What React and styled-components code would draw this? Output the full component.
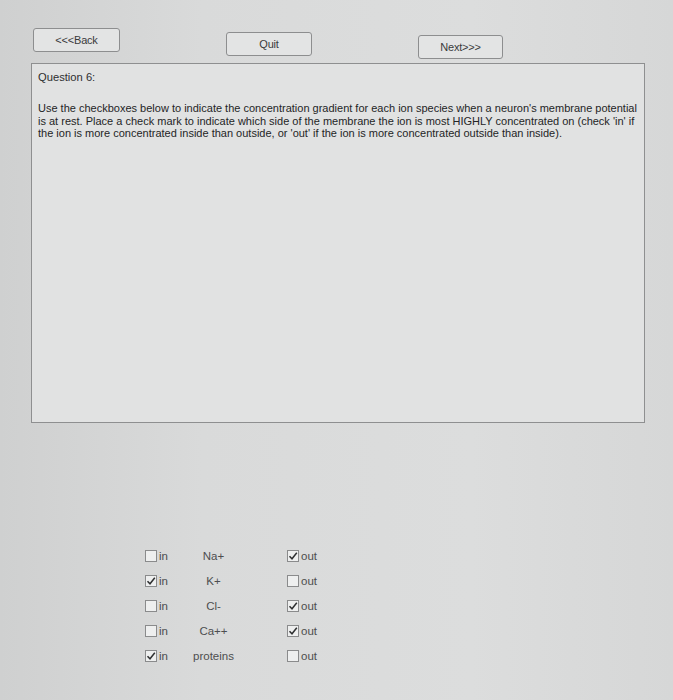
import React from "react";
import styled, { createGlobalStyle } from "styled-components";

const Global = createGlobalStyle`
  html, body { margin: 0; padding: 0; }
  body {
    background: #d6d7d7;
    font-family: "Liberation Sans", Arial, sans-serif;
    color: #2b2c2d;
  }
`;

const Page = styled.div`
  width: 673px;
  height: 700px;
  box-sizing: border-box;
  padding-top: 28px;
  background: linear-gradient(90deg, #cfd0d0 0%, #d9dada 30%, #dcdddd 70%, #d6d7d7 100%);
  overflow: hidden;
`;

const NavRow = styled.div`
  display: flex;
  align-items: flex-start;
  padding-left: 33px;
  gap: 106px;
  height: 35px;
`;

const NavButton = styled.button`
  width: ${(p) => p.$w}px;
  height: 24px;
  margin-top: ${(p) => p.$shift}px;
  box-sizing: border-box;
  border: 1px solid #8d8e8f;
  border-radius: 3px;
  background: #e3e4e4;
  font-family: "Liberation Sans", Arial, sans-serif;
  font-size: 11px;
  color: #3a3b3c;
  padding: 0;
  letter-spacing: -0.2px;
`;

const Panel = styled.div`
  margin-left: 31px;
  width: 614px;
  height: 360px;
  box-sizing: border-box;
  border: 1px solid #8e8f90;
  background: #e1e2e2;
  padding: 7px 6px;
`;

const Title = styled.div`
  font-size: 11.2px;
  line-height: 13px;
  color: #2e2f30;
`;

const Body = styled.p`
  margin: 18px 0 0;
  font-size: 11px;
  line-height: 12.5px;
  color: #242526;
  white-space: nowrap;
`;

const Grid = styled.div`
  display: grid;
  grid-template-columns: 40px 57px 45px auto;
  grid-auto-rows: 25px;
  margin: 120px 0 0 145px;
  align-items: center;
`;

const Choice = styled.label`
  display: flex;
  align-items: center;
  gap: 2px;
  font-size: 11.5px;
  color: #4d4e4f;
  grid-column: ${(p) => p.$col};
`;

const Box = styled.span`
  width: 12px;
  height: 12px;
  box-sizing: border-box;
  border: 1px solid #8a8b8c;
  background: #eeefef;
  display: flex;
  align-items: center;
  justify-content: center;
`;

const Ion = styled.span`
  grid-column: 2;
  text-align: center;
  font-size: 11.5px;
  color: #4d4e4f;
`;

const Check = () => (
  <svg width="10" height="10" viewBox="0 0 10 10">
    <path d="M1.5 5.2 L4 7.8 L8.8 1.8" fill="none" stroke="#2f3031" strokeWidth="1.5" />
  </svg>
);

const rows = [
  { ion: "Na+", inside: false },
  { ion: "K+", inside: true },
  { ion: "Cl-", inside: false },
  { ion: "Ca++", inside: false },
  { ion: "proteins", inside: true },
];

export default function App() {
  return (
    <>
      <Global />
      <Page>
        <NavRow>
          <NavButton $w={87} $shift={0}>&lt;&lt;&lt;Back</NavButton>
          <NavButton $w={86} $shift={4}>Quit</NavButton>
          <NavButton $w={85} $shift={7}>Next&gt;&gt;&gt;</NavButton>
        </NavRow>
        <Panel>
          <Title>Question 6:</Title>
          <Body>
            Use the checkboxes below to indicate the concentration gradient for each ion species when a neuron's membrane potential
            <br />
            is at rest. Place a check mark to indicate which side of the membrane the ion is most HIGHLY concentrated on (check 'in' if
            <br />
            the ion is more concentrated inside than outside, or 'out' if the ion is more concentrated outside than inside).
          </Body>
        </Panel>
        <Grid>
          {rows.map((r) => (
            <React.Fragment key={r.ion}>
              <Choice $col={1}>
                <Box>{r.inside && <Check />}</Box>in
              </Choice>
              <Ion>{r.ion}</Ion>
              <Choice $col={4}>
                <Box>{!r.inside && <Check />}</Box>out
              </Choice>
            </React.Fragment>
          ))}
        </Grid>
      </Page>
    </>
  );
}
